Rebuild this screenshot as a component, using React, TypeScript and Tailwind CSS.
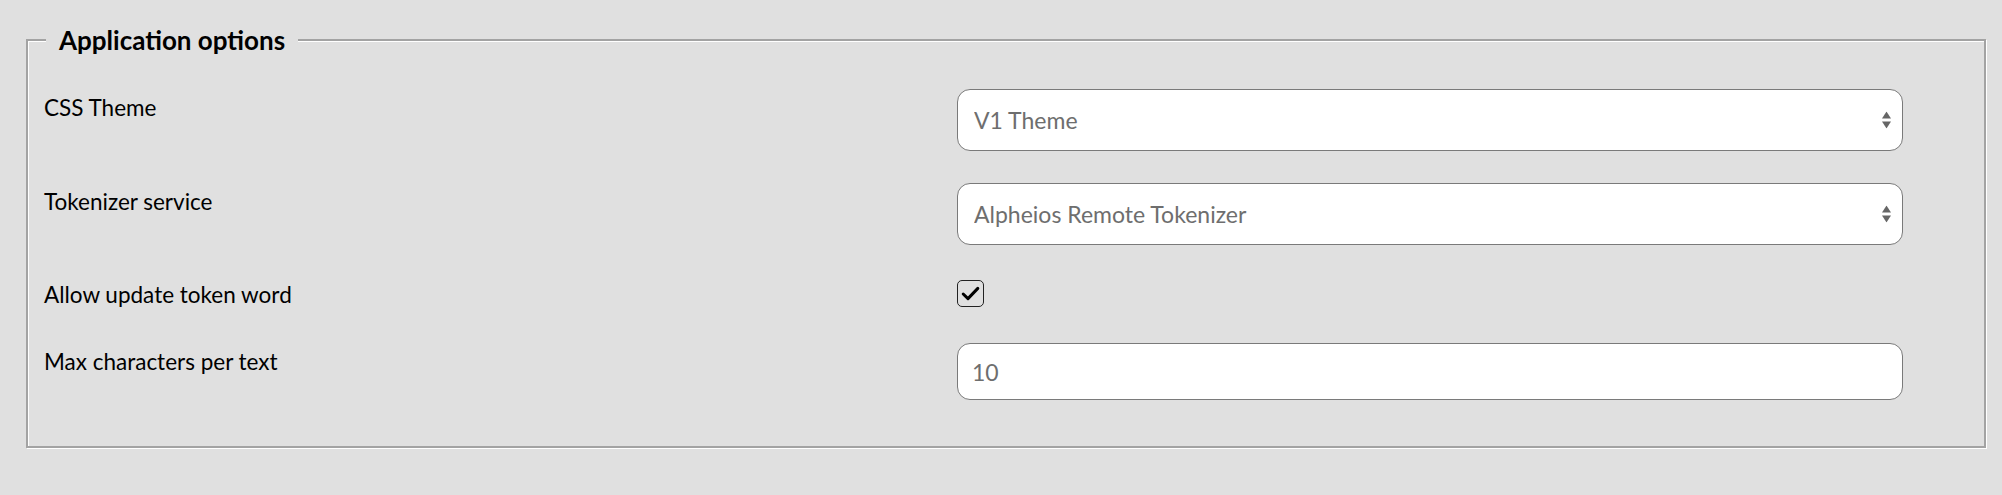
const font = { fontFamily: '"Lato", "Liberation Sans", sans-serif' }

function Arrows() {
  return (
    <svg
      className="pointer-events-none absolute right-[12px] top-1/2 -translate-y-1/2"
      width="9"
      height="17"
      viewBox="0 0 9 17"
    >
      <path d="M4.5 0 L9 7 L0 7 Z" fill="#666" />
      <path d="M0 10 L9 10 L4.5 17 Z" fill="#666" />
    </svg>
  )
}

function Select({ value }: { value: string }) {
  return (
    <div className="relative w-[946px]">
      <select
        defaultValue={value}
        className="h-[62px] w-full appearance-none rounded-[13px] border border-[#7a7a7a] bg-white pl-[16px] text-[23px] text-[#6e6e6e] outline-none"
        style={font}
      >
        <option>{value}</option>
      </select>
      <Arrows />
    </div>
  )
}

export default function App() {
  return (
    <div className="min-h-[495px] bg-[#e0e0e0] pl-[26px] pt-[22px]" style={font}>
      <fieldset className="w-[1960px] border-2 border-[#a3a3a3] px-[16px] pb-[46px] pt-[31px] shadow-[inset_1px_1px_0_#fff,1px_1px_0_#fff]">
        <legend className="ml-[2px] bg-[#e0e0e0] px-[13px] text-[26px] font-bold leading-[36px] text-black">
          Application options
        </legend>

        <div className="grid grid-cols-[913px_946px] items-start">
          <label className="pt-[4px] text-[22.5px] leading-[30px] text-black">CSS Theme</label>
          <Select value="V1 Theme" />

          <div className="col-span-2 h-[32px]" />

          <label className="pt-[4px] text-[22.5px] leading-[30px] text-black">Tokenizer service</label>
          <Select value="Alpheios Remote Tokenizer" />

          <div className="col-span-2 h-[33px]" />

          <label className="pt-[2px] text-[22.5px] leading-[30px] text-black">Allow update token word</label>
          <div className="pt-[2px]">
            <span className="flex h-[27px] w-[27px] items-center justify-center rounded-[5px] border border-[#222] bg-transparent">
              <svg width="19" height="15" viewBox="0 0 19 15">
                <path
                  d="M2.2 8 L7 12.6 L16.8 2.4"
                  fill="none"
                  stroke="#000"
                  strokeWidth="3"
                  strokeLinecap="round"
                  strokeLinejoin="round"
                />
              </svg>
            </span>
          </div>

          <div className="col-span-2 h-[33px]" />

          <label className="pt-[4px] text-[22.5px] leading-[30px] text-black">Max characters per text</label>
          <input
            defaultValue="10"
            className="h-[57px] w-[946px] rounded-[13px] border border-[#7a7a7a] bg-white pl-[14px] text-[23px] text-[#6e6e6e] outline-none"
            style={font}
          />
        </div>
      </fieldset>
    </div>
  )
}
